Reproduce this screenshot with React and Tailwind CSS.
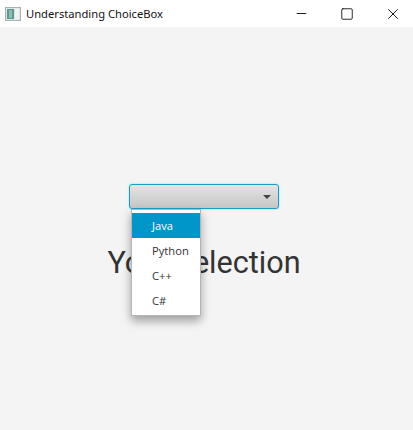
import { Minus, Square, X } from 'lucide-react';

const LANGUAGES = ['Java', 'Python', 'C++', 'C#'];

const AppIcon = () => (
  <svg width="16" height="14" viewBox="0 0 16 14" className="shrink-0">
    <rect x="0.5" y="0.5" width="15" height="13" fill="#dfe6e6" stroke="#a8b2b4" />
    <rect x="2" y="2" width="7" height="10" fill="#5c9a8e" />
    <rect x="4" y="3" width="3" height="8" fill="#8fbdb3" />
    <rect x="10" y="2" width="4" height="10" fill="#f2f4f4" />
  </svg>
);

const App = () => {
  return (
    <div className="w-[413px] h-[430px] flex flex-col bg-[#f4f4f4] overflow-hidden font-['Open_Sans','Noto_Sans',sans-serif]">
      {/* Title bar */}
      <div className="h-[27px] shrink-0 bg-white flex items-center">
        <div className="pl-[5px] flex items-center gap-[5px] flex-1">
          <AppIcon />
          <span className="text-[11.2px] leading-none text-[#111] font-['Noto_Sans',sans-serif]">Understanding ChoiceBox</span>
        </div>
        <div className="flex items-center text-[#111] -mr-[3px]">
          <div className="w-[46px] flex justify-center"><Minus size={15} strokeWidth={1.5} /></div>
          <div className="w-[46px] flex justify-center"><Square size={14} strokeWidth={1.5} /></div>
          <div className="w-[46px] flex justify-center"><X size={18} strokeWidth={1.3} /></div>
        </div>
      </div>

      {/* Content */}
      <div className="flex-1 flex flex-col items-center pt-[157px] pr-[5px]">
        <div className="relative w-[150px]">
          <div className="h-[25px] rounded-[3px] border border-[#1a9fc4] shadow-[0_0_2px_#7fd4ec] bg-gradient-to-b from-[#e4e4e4] to-[#c6c6c6] flex items-center justify-end pr-[7px]">
            <div className="w-0 h-0 border-x-[4px] border-x-transparent border-t-[4px] border-t-[#444]" />
          </div>

          {/* Popup menu */}
          <div className="absolute z-10 left-[2px] top-[25px] w-[70px] bg-white border border-[#b5b5b5] pt-[3px] pb-[2px] shadow-[0_5px_9px_rgba(0,0,0,0.35)]">
            {LANGUAGES.map((lang, i) => (
              <div
                key={lang}
                className={`h-[25px] pl-[20px] pt-[1px] flex items-center text-[11.2px] ${i === 0 ? 'bg-[#0096c9] text-white' : 'text-[#333]'}`}
              >
                {lang}
              </div>
            ))}
          </div>
        </div>

        <div className="mt-[32px] text-[30.6px] leading-[44px] whitespace-nowrap text-[#333] font-['Roboto',sans-serif]">Your selection</div>
      </div>
    </div>
  );
};

export default App;
